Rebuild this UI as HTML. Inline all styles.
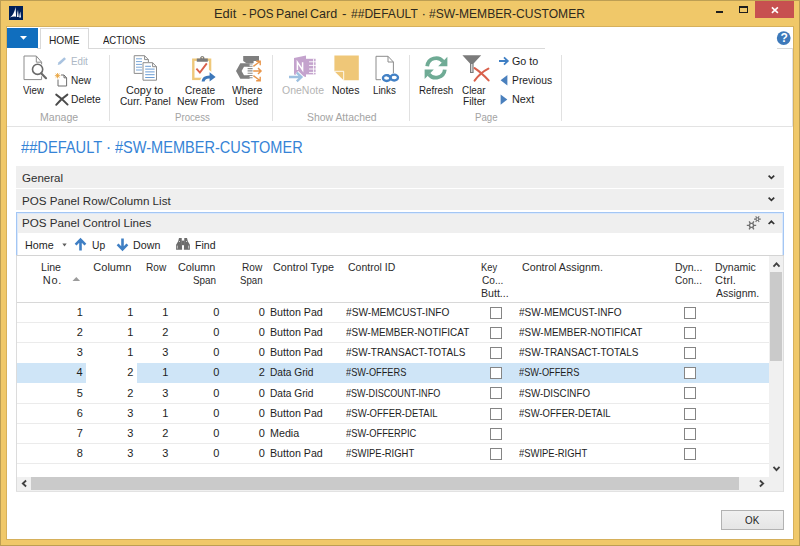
<!DOCTYPE html>
<html lang="en"><head><meta charset="utf-8"><title>Edit - POS Panel Card</title>
<style>
html,body{margin:0;padding:0;background:#f0c869;}
body{width:800px;height:546px;overflow:hidden;font-family:"Liberation Sans",sans-serif;}
#win{position:relative;width:800px;height:546px;background:#f0c869;overflow:hidden;}
#win *{box-sizing:border-box;}
.a{position:absolute;}
.t{position:absolute;white-space:pre;transform-origin:0 0;font-family:"Liberation Sans",sans-serif;}
.sep{position:absolute;top:55px;width:1px;height:66px;background:#e1e1e1;}
.ft{position:absolute;left:16px;width:768px;background:#efefef;}
.rl{position:absolute;left:17px;width:752px;height:1px;background:#ebebeb;}
.cb{position:absolute;width:12px;height:12px;border:1px solid #858585;background:#fff;}
svg{position:absolute;overflow:visible;}

</style></head>
<body>
<div id="win">
<!-- window frame -->
<div class="a" style="left:0;top:0;width:800px;height:546px;border:1px solid #bd9e53;"></div>
<div class="a" style="left:6px;top:26px;width:788px;height:514px;border:1px solid #d6b05b;"></div>
<div class="a" style="left:7px;top:27px;width:786px;height:512px;background:#fff;"></div>
<!-- app icon -->
<svg style="left:9px;top:6px" width="14" height="14" viewBox="0 0 14 14"><rect width="14" height="14" fill="#00205a"/><path d="M0.8 11.6 Q5 8.6 6.6 0.9 L7.1 10.7 Q4 10 0.8 11.6 Z" fill="#fff"/><path d="M8 10.9 Q8.2 6 9 3.7 L9.7 10.9 Z" fill="#fff"/><path d="M10.2 11.4 Q10.5 8 11.3 5.5 L12 11.6 Z" fill="#fff"/></svg>
<!-- window buttons -->
<div class="a" style="left:716px;top:11px;width:7px;height:2px;background:#1e1e1e;"></div>
<div class="a" style="left:739px;top:6px;width:9px;height:7px;border:1px solid #1e1e1e;border-top-width:2px;"></div>
<div class="a" style="left:755px;top:1px;width:39px;height:17px;background:#c75050;"></div>
<svg style="left:771px;top:7px" width="8" height="6" viewBox="0 0 8 6"><path d="M0.9 0.4 L6.9 5.8 M6.9 0.4 L0.9 5.8" stroke="#fff" stroke-width="1.6" fill="none"/></svg>
<!-- tab row -->
<div class="a" style="left:7px;top:28px;width:31px;height:20px;background:#106ebe;"></div>
<svg style="left:19.6px;top:36.2px" width="7" height="4" viewBox="0 0 7 4"><path d="M0 0 H7 L3.5 3.7 Z" fill="#fff"/></svg>
<div class="a" style="left:37px;top:48px;width:508px;height:1px;background:#d9d9d9;"></div>
<div class="a" style="left:40px;top:28px;width:49px;height:21px;background:#fff;border:1px solid #d9d9d9;border-bottom:none;"></div>
<!-- help -->
<div class="a" style="left:777px;top:48px;width:16px;height:1px;background:#d9d9d9;"></div><div class="a" style="left:792px;top:48px;width:1px;height:79px;background:#e0e0e0;"></div>
<svg style="left:777px;top:31px" width="14" height="14" viewBox="0 0 14 14"><circle cx="6.7" cy="7.1" r="6.9" fill="#3d79ba"/></svg>
<span class="t" style="left:780.4px;top:32px;font-size:12px;line-height:13px;font-weight:bold;color:#fff;">?</span>
<!-- ribbon -->
<div class="a" style="left:7px;top:126px;width:786px;height:1px;background:#e3e3e3;"></div>
<div class="sep" style="left:109px"></div>
<div class="sep" style="left:272px"></div>
<div class="sep" style="left:409px"></div>
<div class="sep" style="left:561px"></div>
<!--ICONS_START-->
<!-- View icon -->
<svg style="left:0;top:0" width="800" height="130" viewBox="0 0 800 130">
<g fill="none" stroke-linejoin="miter">
<!-- view -->
<path d="M24 56 H36.3 L41.6 62.2 V79.6 H24 Z M36.3 56 V62.2 H41.6" stroke="#8c8c8c" stroke-width="1" fill="#fff"/>
<path d="M41.4 73.4 L46 78.2" stroke="#fff" stroke-width="4" stroke-linecap="round"/>
<circle cx="37.6" cy="69.3" r="6.4" fill="#fff" stroke="none"/>
<circle cx="37.6" cy="69.3" r="5.1" stroke="#6a6a6a" stroke-width="1.6" fill="#fff"/>
<path d="M41.4 73.4 L46 78.2" stroke="#6a6a6a" stroke-width="2.2" stroke-linecap="round"/>
<!-- edit pencil -->
<path d="M57.6 65 L58.6 62.2 L64.3 57.3 L66 59 L60.4 64.2 Z" fill="#a9c3e0" stroke="none"/>
<!-- new -->
<path d="M61 75 H64 L66.6 77.8 V86 H58 V79.5 M64 75 V77.8 H66.6" stroke="#6f6f6f" stroke-width="1"/>
<path d="M57.6 73 V78.4 M54.9 75.7 H60.3 M55.7 73.8 L59.5 77.6 M59.5 73.8 L55.7 77.6" stroke="#e8a33c" stroke-width="0.9"/>
<!-- delete -->
<path d="M56.2 94.6 Q62 98.5 67.6 104.6 M67.4 94.6 Q61 99 56.2 104.8" stroke="#4b4b4b" stroke-width="1.9" stroke-linecap="round"/>
<!-- copy -->
<path d="M134.2 55.7 H144.6 L148.4 59.6 V62 M142.5 73.4 H134.2 V55.7 M144.6 55.7 V59.6 H148.4" stroke="#8c8c8c" stroke-width="1" fill="#fff"/>
<path d="M136 58.8 H142 M136 61.6 H142 M136 64.4 H142 M136 67.2 H142 M136 70 H142" stroke="#7aa7d8" stroke-width="1"/>
<path d="M143 62.7 H152.6 L156.5 66.7 V80.2 H143 Z" fill="#fff" stroke="#8c8c8c" stroke-width="1"/>
<path d="M152.6 62.7 V66.7 H156.5" stroke="#8c8c8c" stroke-width="1"/>
<path d="M145.2 66.3 H151 M145.2 69.1 H154.6 M145.2 71.9 H154.6 M145.2 74.7 H154.6 M145.2 77.5 H154.6" stroke="#6b9dd4" stroke-width="1"/>
<!-- create new from -->
<rect x="193.3" y="59.7" width="16.8" height="19.2" stroke="#efc87a" stroke-width="2.4" fill="#fff"/>
<path d="M196.8 61.7 V58.4 H200.2 V57.4 Q202.3 54.6 204.4 57.4 V58.4 H207.8 V61.7 Z" fill="#7b7b7b" stroke="none"/>
<circle cx="202.3" cy="57.6" r="0.8" fill="#f4e4c0" stroke="none"/>
<path d="M196.4 68.6 L199.9 72.6 L206.8 63.4" stroke="#d95f4b" stroke-width="1.9"/>
<path d="M200.5 83 Q201 75 209 75.5 V71 L216.6 77 L209 83 V79 Q204.5 78.6 203.8 83 Z" fill="#fff" stroke="#fff" stroke-width="1.6"/>
<path d="M201.6 81.6 Q202 75.6 209.6 75.6 V72.2 L215.6 77 L209.6 81.6 V78.6 Q205.2 78.4 204.6 81.6 Z" fill="#3d78ba" stroke="none"/>
<!-- where used -->
<path d="M243.2 56 H259 V61 H253.6 V63.2 H246.4 L243.2 61 Z" fill="#7f7f7f" stroke="none"/>
<path d="M236 71 L240.3 63.2 H249.6 V66.8 H244 L241.6 71 L244 75.2 H249.6 V78.8 H240.3 Z" fill="#7f7f7f" stroke="none"/>
<path d="M247.6 64 H252.6 M247.6 66.3 H252.6 M247.6 68.6 H252.6 M247.6 70.9 H252.6 M247.6 73.2 H252.6 M247.6 75.5 H252.6 M247.6 77.8 H252.6" stroke="#8a8a8a" stroke-width="1.1"/>
<path d="M253.2 71 H260.6 M258 68 L261 71 L258 74" stroke="#e8954a" stroke-width="1.5"/>
<path d="M253.4 66.4 L259.6 61.8 M256.2 61.2 H260.2 V65.2" stroke="#e8954a" stroke-width="1.4"/>
<path d="M253.4 75.6 L259.6 80.2 M256.2 80.8 H260.2 V76.8" stroke="#e8954a" stroke-width="1.4"/>
<!-- onenote -->
<path d="M294 58 L306 55.6 V76.9 L294 74.4 Z" fill="#c4a3cd" stroke="none"/>
<path d="M306 58.8 H315.6 V74.4 H306 Z" fill="#c4a3cd" stroke="none"/>
<path d="M309 61.8 H316 M309 65.4 H316 M309 69 H316 M309 72.4 H316 M313.6 58.8 V74.4" stroke="#fff" stroke-width="0.9"/>
<path d="M297.4 70 V62.2 L302.6 70 V62.2" stroke="#fff" stroke-width="1.5"/>
<path d="M288.6 77 H300.6 M296.8 72.6 L301.4 77 L296.8 81.4" stroke="#fff" stroke-width="4.2"/>
<path d="M289 77 H300.6 M296.8 72.6 L301.4 77 L296.8 81.4" stroke="#9dc0e0" stroke-width="2.4"/>
<!-- notes -->
<path d="M334.4 55.6 H358.8 V80.2 H343.6 L334.4 71.2 Z" fill="#efc778" stroke="none"/>
<path d="M336.6 72.3 H342.6 V78.4 Z" fill="#efc778" stroke="none"/>
<path d="M334.4 71.3 H343.7 V80.2" stroke="#fff" stroke-width="0.9"/>
<!-- links -->
<path d="M382 79.7 H376 V56.3 H388 L393.4 62 V73.4 M388 56.3 V62 H393.4" stroke="#8c8c8c" stroke-width="1"/>
<path d="M381 82.6 V73.4 H399.6 V82.6 Z" fill="#fff" stroke="none"/>
<ellipse cx="386.7" cy="78.1" rx="3.8" ry="2.9" stroke="#4381c5" stroke-width="2.3" fill="#fff"/>
<ellipse cx="394.2" cy="77.6" rx="3.8" ry="2.9" stroke="#4381c5" stroke-width="2.3" fill="none"/>
<path d="M387 75.2 Q390.6 76 390.4 79.4" stroke="#4381c5" stroke-width="2.3"/>
<!-- refresh -->
<path d="M427.2 66.2 A9 9 0 0 1 443.2 61.6" stroke="#6fab95" stroke-width="3.8"/>
<path d="M447.4 56.8 V66.2 H438.2 Z" fill="#6fab95" stroke="none"/>
<path d="M444.8 69.6 A9 9 0 0 1 428.8 74.2" stroke="#6fab95" stroke-width="3.8"/>
<path d="M424.6 79 V69.6 H433.8 Z" fill="#6fab95" stroke="none"/>
<!-- clear filter -->
<path d="M462.4 55.2 H481.2 L473.6 63.4 V73 H470 V63.4 Z" fill="#7b7b7b" stroke="none"/>
<path d="M471.2 64 V72 H472.4 V64 Z" fill="#e9e9e9" stroke="none"/>
<path d="M474.6 68.2 Q481 72.4 488.6 80.4 M488.4 68.6 Q480.4 72.6 474.6 80.6" stroke="#d9604c" stroke-width="2.1" stroke-linecap="round"/>
<!-- go to -->
<path d="M499 61 H507.6 M504 57.4 L507.8 61 L504 64.6" stroke="#3f7fc4" stroke-width="1.8"/>
<path d="M507.4 75 V85.6 L500.6 80.3 Z" fill="#4a80bd" stroke="none"/>
<path d="M500.6 94.4 V104.8 L507.3 99.6 Z" fill="#4a80bd" stroke="none"/>
</g>
</svg>

<!--ICONS_END-->
<!-- fasttabs -->
<div class="ft" style="top:166px;height:22px;"></div>
<div class="ft" style="top:189px;height:21px;"></div>
<div class="a" style="left:16px;top:212px;width:768px;height:44px;border:1px solid #a3c6f4;border-bottom:none;background:#fff;"></div>
<div class="a" style="left:17px;top:213px;width:766px;height:42px;border:1px solid #dbe8fa;border-bottom:none;"></div>
<div class="a" style="left:18px;top:214px;width:764px;height:19px;background:#efefef;"></div>
<div class="a" style="left:16px;top:255px;width:768px;height:1px;background:#d4d4d4;"></div>
<!-- toolbar icons -->
<svg style="left:0;top:212px" width="800" height="44" viewBox="0 212 800 44">
<path d="M62.3 243.6 H66.7 L64.5 246.4 Z" fill="#606060"/>
<path d="M80.5 250.4 V240.6 M75.6 244.6 L80.5 239.6 L85.4 244.6" stroke="#3f7fc4" stroke-width="2.6" fill="none"/>
<path d="M122.5 238.6 V248.6 M117.6 244.4 L122.5 249.4 L127.4 244.4" stroke="#3f7fc4" stroke-width="2.6" fill="none"/>
<g fill="#6c6c6c">
<path d="M179 237.9 H181.7 L182.1 249.7 H176.1 V244.8 L178.2 241.2 Z"/>
<path d="M187 237.9 H184.3 L183.9 249.7 H189.9 V244.8 L187.8 241.2 Z"/>
<rect x="181.6" y="240.6" width="2.8" height="4.6"/>
</g>
<path d="M177.4 245.6 V248.6 M188.6 245.6 V248.6" stroke="#e4e4e4" stroke-width="0.7"/>
<circle cx="179.5" cy="241.4" r="0.5" fill="#eee"/><circle cx="186.5" cy="241.4" r="0.5" fill="#eee"/>
<g fill="none" stroke="#727272"><path d="M753.50 225.40 L756.20 225.40 M752.50 227.13 L753.85 229.47 M750.50 227.13 L749.15 229.47 M749.50 225.40 L746.80 225.40 M750.50 223.67 L749.15 221.33 M752.50 223.67 L753.85 221.33" stroke-width="1.4"/><circle cx="751.5" cy="225.4" r="2.0" stroke-width="1.4" fill="#fafafa"/><path d="M758.80 219.10 L760.80 219.10 M758.10 220.31 L759.10 222.04 M756.70 220.31 L755.70 222.04 M756.00 219.10 L754.00 219.10 M756.70 217.89 L755.70 216.16 M758.10 217.89 L759.10 216.16" stroke-width="1.1"/><circle cx="757.4" cy="219.1" r="1.4" stroke-width="1.1" fill="#f4f4f4"/></g>
</svg>
<!-- chevrons -->
<svg style="left:768.4px;top:174.6px" width="7" height="5" viewBox="0 0 7 5"><path d="M0.6 0.7 L3.4 3.4 L6.2 0.7" stroke="#333" stroke-width="1.7" fill="none"/></svg>
<svg style="left:768.4px;top:197.2px" width="7" height="5" viewBox="0 0 7 5"><path d="M0.6 0.7 L3.4 3.4 L6.2 0.7" stroke="#333" stroke-width="1.7" fill="none"/></svg>
<svg style="left:768.4px;top:220.4px" width="7" height="5" viewBox="0 0 7 5"><path d="M0.6 4 L3.4 1.3 L6.2 4" stroke="#333" stroke-width="1.7" fill="none"/></svg>
<!-- grid -->
<div class="a" style="left:16px;top:256px;width:1px;height:236px;background:#dcdcdc;"></div>
<div class="a" style="left:17px;top:302px;width:752px;height:1px;background:#d8d8d8;"></div>
<div class="a" style="left:17px;top:363px;width:69px;height:20px;background:#cfe5f7;"></div><div class="a" style="left:137px;top:363px;width:632px;height:20px;background:#cfe5f7;"></div>
<div class="rl" style="top:322px"></div>
<div class="rl" style="top:342px"></div>
<div class="rl" style="top:403px"></div>
<div class="rl" style="top:423px"></div>
<div class="rl" style="top:443px"></div>
<div class="rl" style="top:463px"></div>
<div class="cb" style="left:490px;top:307px"></div><div class="cb" style="left:684px;top:307px"></div>
<div class="cb" style="left:490px;top:327px"></div><div class="cb" style="left:684px;top:327px"></div>
<div class="cb" style="left:490px;top:347px"></div><div class="cb" style="left:684px;top:347px"></div>
<div class="cb" style="left:490px;top:367px"></div><div class="cb" style="left:684px;top:367px"></div>
<div class="cb" style="left:490px;top:387px"></div><div class="cb" style="left:684px;top:387px"></div>
<div class="cb" style="left:490px;top:408px"></div><div class="cb" style="left:684px;top:408px"></div>
<div class="cb" style="left:490px;top:428px"></div><div class="cb" style="left:684px;top:428px"></div>
<div class="cb" style="left:490px;top:448px"></div><div class="cb" style="left:684px;top:448px"></div>
<div class="a" style="left:769px;top:256px;width:15px;height:235px;background:#f0f0f0;"></div>
<div class="a" style="left:770px;top:272px;width:12px;height:89px;background:#cacaca;"></div>
<svg style="left:772.6px;top:262.4px" width="7" height="6" viewBox="0 0 7 6"><path d="M0.5 4.6 L3.5 1.3 L6.5 4.6" stroke="#404040" stroke-width="1.8" fill="none"/></svg>
<svg style="left:772.6px;top:466.4px" width="7" height="6" viewBox="0 0 7 6"><path d="M0.5 0.8 L3.5 4.1 L6.5 0.8" stroke="#404040" stroke-width="1.8" fill="none"/></svg>
<div class="a" style="left:17px;top:477px;width:752px;height:14px;background:#f0f0f0;"></div>
<div class="a" style="left:31px;top:477px;width:708px;height:13px;background:#cacaca;"></div>
<svg style="left:20.6px;top:480.2px" width="6" height="7" viewBox="0 0 6 7"><path d="M5.1 0.5 L1.8 3.5 L5.1 6.5" stroke="#404040" stroke-width="1.8" fill="none"/></svg>
<svg style="left:759px;top:480.2px" width="6" height="7" viewBox="0 0 6 7"><path d="M0.9 0.5 L4.2 3.5 L0.9 6.5" stroke="#404040" stroke-width="1.8" fill="none"/></svg>
<div class="a" style="left:16px;top:491px;width:768px;height:1px;background:#e2e2e2;"></div>
<!-- grid right border --><div class="a" style="left:783px;top:256px;width:1px;height:236px;background:#dedede;"></div>
<!-- sort arrow --><svg style="left:72px;top:276px" width="9" height="6" viewBox="0 0 9 6"><path d="M0.5 5 L4.3 1 L8.1 5 Z" fill="#9c9c9c"/></svg>
<!-- OK button -->
<div class="a" style="left:721px;top:510px;width:63px;height:20px;border:1px solid #b2b2b2;background:linear-gradient(#f0f0f0,#e5e5e5);"></div>

<span class="t" style="left:214.04px;top:5.00px;font-size:13.5px;line-height:18px;color:#2e2a1e;transform:scaleX(0.9551);">Edit</span>
<span class="t" style="left:241.90px;top:5.00px;font-size:13.5px;line-height:18px;color:#2e2a1e;">-</span>
<span class="t" style="left:248.54px;top:5.00px;font-size:13.5px;line-height:18px;color:#2e2a1e;transform:scaleX(0.8611);">POS</span>
<span class="t" style="left:275.94px;top:5.00px;font-size:13.5px;line-height:18px;color:#2e2a1e;transform:scaleX(0.9084);">Panel</span>
<span class="t" style="left:309.90px;top:5.00px;font-size:13.5px;line-height:18px;color:#2e2a1e;transform:scaleX(0.9297);">Card</span>
<span class="t" style="left:342.10px;top:5.00px;font-size:13.5px;line-height:18px;color:#2e2a1e;">-</span>
<span class="t" style="left:350.85px;top:5.00px;font-size:13.5px;line-height:18px;color:#2e2a1e;transform:scaleX(0.8926);">##DEFAULT</span>
<span class="t" style="left:421.50px;top:5.00px;font-size:13.5px;line-height:18px;color:#2e2a1e;">·</span>
<span class="t" style="left:429.25px;top:5.00px;font-size:13.5px;line-height:18px;color:#2e2a1e;transform:scaleX(0.8948);">#SW-MEMBER-CUSTOMER</span>
<span class="t" style="left:49.31px;top:33.00px;font-size:11px;line-height:14px;color:#222;transform:scaleX(0.9219);">HOME</span>
<span class="t" style="left:103.00px;top:33.00px;font-size:11px;line-height:14px;color:#222;transform:scaleX(0.8660);">ACTIONS</span>
<span class="t" style="left:23.00px;top:83.00px;font-size:11px;line-height:14px;color:#1e1e1e;transform:scaleX(0.8842);">View</span>
<span class="t" style="left:70.83px;top:54.00px;font-size:11px;line-height:14px;color:#adb8c5;transform:scaleX(0.8877);">Edit</span>
<span class="t" style="left:71.22px;top:73.00px;font-size:11px;line-height:14px;color:#1e1e1e;transform:scaleX(0.9106);">New</span>
<span class="t" style="left:71.20px;top:92.00px;font-size:11px;line-height:14px;color:#1e1e1e;transform:scaleX(0.9333);">Delete</span>
<span class="t" style="left:40.28px;top:110.00px;font-size:11px;line-height:14px;color:#a3a3a3;transform:scaleX(0.9610);">Manage</span>
<span class="t" style="left:125.51px;top:83.00px;font-size:11px;line-height:14px;color:#1e1e1e;transform:scaleX(0.9865);">Copy to</span>
<span class="t" style="left:119.54px;top:94.00px;font-size:11px;line-height:14px;color:#1e1e1e;transform:scaleX(0.9209);">Curr. Panel</span>
<span class="t" style="left:185.29px;top:83.00px;font-size:11px;line-height:14px;color:#1e1e1e;transform:scaleX(0.9141);">Create</span>
<span class="t" style="left:176.80px;top:94.00px;font-size:11px;line-height:14px;color:#1e1e1e;transform:scaleX(0.9391);">New From</span>
<span class="t" style="left:232.00px;top:83.00px;font-size:11px;line-height:14px;color:#1e1e1e;transform:scaleX(0.9375);">Where</span>
<span class="t" style="left:235.32px;top:94.00px;font-size:11px;line-height:14px;color:#1e1e1e;transform:scaleX(0.9072);">Used</span>
<span class="t" style="left:174.84px;top:110.00px;font-size:11px;line-height:14px;color:#a3a3a3;transform:scaleX(0.8774);">Process</span>
<span class="t" style="left:282.02px;top:83.00px;font-size:11px;line-height:14px;color:#b4b4b4;transform:scaleX(0.9538);">OneNote</span>
<span class="t" style="left:332.28px;top:83.00px;font-size:11px;line-height:14px;color:#1e1e1e;transform:scaleX(0.9550);">Notes</span>
<span class="t" style="left:373.08px;top:83.00px;font-size:11px;line-height:14px;color:#1e1e1e;transform:scaleX(0.8889);">Links</span>
<span class="t" style="left:307.03px;top:110.00px;font-size:11px;line-height:14px;color:#a3a3a3;transform:scaleX(0.9481);">Show Attached</span>
<span class="t" style="left:419.08px;top:83.00px;font-size:11px;line-height:14px;color:#1e1e1e;transform:scaleX(0.8899);">Refresh</span>
<span class="t" style="left:462.05px;top:83.00px;font-size:11px;line-height:14px;color:#1e1e1e;transform:scaleX(0.8971);">Clear</span>
<span class="t" style="left:463.05px;top:94.00px;font-size:11px;line-height:14px;color:#1e1e1e;transform:scaleX(0.9298);">Filter</span>
<span class="t" style="left:512.26px;top:54.00px;font-size:11px;line-height:14px;color:#1e1e1e;transform:scaleX(0.9750);">Go to</span>
<span class="t" style="left:512.05px;top:73.00px;font-size:11px;line-height:14px;color:#1e1e1e;transform:scaleX(0.9377);">Previous</span>
<span class="t" style="left:512.01px;top:92.00px;font-size:11px;line-height:14px;color:#1e1e1e;transform:scaleX(0.9841);">Next</span>
<span class="t" style="left:474.84px;top:110.00px;font-size:11px;line-height:14px;color:#a3a3a3;transform:scaleX(0.8776);">Page</span>
<span class="t" style="left:20.50px;top:137.00px;font-size:16.5px;line-height:21px;color:#3583d6;transform:scaleX(0.8885);">##DEFAULT</span>
<span class="t" style="left:105.70px;top:137.00px;font-size:16.5px;line-height:21px;color:#3583d6;">·</span>
<span class="t" style="left:115.00px;top:137.00px;font-size:16.5px;line-height:21px;color:#3583d6;transform:scaleX(0.8810);">#SW-MEMBER-CUSTOMER</span>
<span class="t" style="left:21.51px;top:170.00px;font-size:11.7px;line-height:15px;color:#2e2e2e;transform:scaleX(0.9877);">General</span>
<span class="t" style="left:21.80px;top:193.00px;font-size:11.7px;line-height:15px;color:#2e2e2e;transform:scaleX(0.9953);">POS Panel Row/Column List</span>
<span class="t" style="left:21.80px;top:215.00px;font-size:11.7px;line-height:15px;color:#2e2e2e;transform:scaleX(0.9953);">POS Panel Control Lines</span>
<span class="t" style="left:25.27px;top:238.00px;font-size:11px;line-height:14px;color:#1e1e1e;transform:scaleX(0.9770);">Home</span>
<span class="t" style="left:91.55px;top:238.00px;font-size:11px;line-height:14px;color:#1e1e1e;transform:scaleX(0.9346);">Up</span>
<span class="t" style="left:133.27px;top:238.00px;font-size:11px;line-height:14px;color:#1e1e1e;transform:scaleX(0.9720);">Down</span>
<span class="t" style="left:194.53px;top:238.00px;font-size:11px;line-height:14px;color:#1e1e1e;transform:scaleX(0.9575);">Find</span>
<span class="t" style="left:40.78px;top:260.00px;font-size:11px;line-height:14px;color:#2b2b2b;transform:scaleX(0.9620);">Line</span>
<span class="t" style="left:42.75px;top:273.00px;font-size:11px;line-height:14px;color:#2b2b2b;letter-spacing:0.750px;">No.</span>
<span class="t" style="left:93.30px;top:260.00px;font-size:11px;line-height:14px;color:#2b2b2b;letter-spacing:0.010px;">Column</span>
<span class="t" style="left:145.56px;top:260.00px;font-size:11px;line-height:14px;color:#2b2b2b;transform:scaleX(0.9176);">Row</span>
<span class="t" style="left:178.41px;top:260.00px;font-size:11px;line-height:14px;color:#2b2b2b;transform:scaleX(0.9823);">Column</span>
<span class="t" style="left:192.55px;top:273.00px;font-size:11px;line-height:14px;color:#2b2b2b;transform:scaleX(0.8980);">Span</span>
<span class="t" style="left:241.81px;top:260.00px;font-size:11px;line-height:14px;color:#2b2b2b;transform:scaleX(0.9176);">Row</span>
<span class="t" style="left:239.56px;top:273.00px;font-size:11px;line-height:14px;color:#2b2b2b;transform:scaleX(0.8776);">Span</span>
<span class="t" style="left:273.26px;top:260.00px;font-size:11px;line-height:14px;color:#2b2b2b;transform:scaleX(0.9796);">Control Type</span>
<span class="t" style="left:348.27px;top:260.00px;font-size:11px;line-height:14px;color:#2b2b2b;transform:scaleX(0.9536);">Control ID</span>
<span class="t" style="left:481.36px;top:260.00px;font-size:11px;line-height:14px;color:#2b2b2b;transform:scaleX(0.8493);">Key</span>
<span class="t" style="left:481.54px;top:273.00px;font-size:11px;line-height:14px;color:#2b2b2b;transform:scaleX(0.9195);">Co...</span>
<span class="t" style="left:481.28px;top:286.00px;font-size:11px;line-height:14px;color:#2b2b2b;transform:scaleX(0.9630);">Butt...</span>
<span class="t" style="left:521.51px;top:260.00px;font-size:11px;line-height:14px;color:#2b2b2b;transform:scaleX(0.9725);">Control Assignm.</span>
<span class="t" style="left:675.09px;top:260.00px;font-size:11px;line-height:14px;color:#2b2b2b;transform:scaleX(0.9519);">Dyn...</span>
<span class="t" style="left:675.34px;top:273.00px;font-size:11px;line-height:14px;color:#2b2b2b;transform:scaleX(0.9179);">Con...</span>
<span class="t" style="left:714.89px;top:260.00px;font-size:11px;line-height:14px;color:#2b2b2b;transform:scaleX(0.9533);">Dynamic</span>
<span class="t" style="left:715.10px;top:273.00px;font-size:11px;line-height:14px;color:#2b2b2b;letter-spacing:0.162px;">Ctrl.</span>
<span class="t" style="left:715.60px;top:286.00px;font-size:11px;line-height:14px;color:#2b2b2b;transform:scaleX(0.9537);">Assignm.</span>
<span class="t" style="left:76.65px;top:305.00px;font-size:11px;line-height:14px;color:#1e1e1e;">1</span>
<span class="t" style="left:127.25px;top:305.00px;font-size:11px;line-height:14px;color:#1e1e1e;">1</span>
<span class="t" style="left:162.35px;top:305.00px;font-size:11px;line-height:14px;color:#1e1e1e;">1</span>
<span class="t" style="left:213.35px;top:305.00px;font-size:11px;line-height:14px;color:#1e1e1e;">0</span>
<span class="t" style="left:258.65px;top:305.00px;font-size:11px;line-height:14px;color:#1e1e1e;">0</span>
<span class="t" style="left:270.27px;top:305.00px;font-size:11px;line-height:14px;color:#1e1e1e;transform:scaleX(0.9698);">Button Pad</span>
<span class="t" style="left:346.00px;top:305.00px;font-size:11px;line-height:14px;color:#1e1e1e;transform:scaleX(0.9217);">#SW-MEMCUST-INFO</span>
<span class="t" style="left:519.00px;top:305.00px;font-size:11px;line-height:14px;color:#1e1e1e;transform:scaleX(0.9128);">#SW-MEMCUST-INFO</span>
<span class="t" style="left:76.65px;top:325.00px;font-size:11px;line-height:14px;color:#1e1e1e;">2</span>
<span class="t" style="left:127.25px;top:325.00px;font-size:11px;line-height:14px;color:#1e1e1e;">1</span>
<span class="t" style="left:162.35px;top:325.00px;font-size:11px;line-height:14px;color:#1e1e1e;">2</span>
<span class="t" style="left:213.35px;top:325.00px;font-size:11px;line-height:14px;color:#1e1e1e;">0</span>
<span class="t" style="left:258.65px;top:325.00px;font-size:11px;line-height:14px;color:#1e1e1e;">0</span>
<span class="t" style="left:270.27px;top:325.00px;font-size:11px;line-height:14px;color:#1e1e1e;transform:scaleX(0.9698);">Button Pad</span>
<span class="t" style="left:346.00px;top:325.00px;font-size:11px;line-height:14px;color:#1e1e1e;transform:scaleX(0.9028);">#SW-MEMBER-NOTIFICAT</span>
<span class="t" style="left:519.00px;top:325.00px;font-size:11px;line-height:14px;color:#1e1e1e;transform:scaleX(0.9028);">#SW-MEMBER-NOTIFICAT</span>
<span class="t" style="left:76.65px;top:345.00px;font-size:11px;line-height:14px;color:#1e1e1e;">3</span>
<span class="t" style="left:127.25px;top:345.00px;font-size:11px;line-height:14px;color:#1e1e1e;">1</span>
<span class="t" style="left:162.35px;top:345.00px;font-size:11px;line-height:14px;color:#1e1e1e;">3</span>
<span class="t" style="left:213.35px;top:345.00px;font-size:11px;line-height:14px;color:#1e1e1e;">0</span>
<span class="t" style="left:258.65px;top:345.00px;font-size:11px;line-height:14px;color:#1e1e1e;">0</span>
<span class="t" style="left:270.27px;top:345.00px;font-size:11px;line-height:14px;color:#1e1e1e;transform:scaleX(0.9698);">Button Pad</span>
<span class="t" style="left:346.00px;top:345.00px;font-size:11px;line-height:14px;color:#1e1e1e;transform:scaleX(0.9084);">#SW-TRANSACT-TOTALS</span>
<span class="t" style="left:519.00px;top:345.00px;font-size:11px;line-height:14px;color:#1e1e1e;transform:scaleX(0.9084);">#SW-TRANSACT-TOTALS</span>
<span class="t" style="left:76.40px;top:365.00px;font-size:11px;line-height:14px;color:#1e1e1e;">4</span>
<span class="t" style="left:127.25px;top:365.00px;font-size:11px;line-height:14px;color:#1e1e1e;">2</span>
<span class="t" style="left:162.35px;top:365.00px;font-size:11px;line-height:14px;color:#1e1e1e;">1</span>
<span class="t" style="left:213.35px;top:365.00px;font-size:11px;line-height:14px;color:#1e1e1e;">0</span>
<span class="t" style="left:258.65px;top:365.00px;font-size:11px;line-height:14px;color:#1e1e1e;">2</span>
<span class="t" style="left:270.31px;top:365.00px;font-size:11px;line-height:14px;color:#1e1e1e;transform:scaleX(0.9246);">Data Grid</span>
<span class="t" style="left:346.00px;top:365.00px;font-size:11px;line-height:14px;color:#1e1e1e;transform:scaleX(0.8392);">#SW-OFFERS</span>
<span class="t" style="left:519.00px;top:365.00px;font-size:11px;line-height:14px;color:#1e1e1e;transform:scaleX(0.8392);">#SW-OFFERS</span>
<span class="t" style="left:76.65px;top:386.00px;font-size:11px;line-height:14px;color:#1e1e1e;">5</span>
<span class="t" style="left:127.25px;top:386.00px;font-size:11px;line-height:14px;color:#1e1e1e;">2</span>
<span class="t" style="left:162.35px;top:386.00px;font-size:11px;line-height:14px;color:#1e1e1e;">3</span>
<span class="t" style="left:213.35px;top:386.00px;font-size:11px;line-height:14px;color:#1e1e1e;">0</span>
<span class="t" style="left:258.65px;top:386.00px;font-size:11px;line-height:14px;color:#1e1e1e;">0</span>
<span class="t" style="left:270.31px;top:386.00px;font-size:11px;line-height:14px;color:#1e1e1e;transform:scaleX(0.9246);">Data Grid</span>
<span class="t" style="left:346.00px;top:386.00px;font-size:11px;line-height:14px;color:#1e1e1e;transform:scaleX(0.8264);">#SW-DISCOUNT-INFO</span>
<span class="t" style="left:519.00px;top:386.00px;font-size:11px;line-height:14px;color:#1e1e1e;transform:scaleX(0.8893);">#SW-DISCINFO</span>
<span class="t" style="left:76.65px;top:406.00px;font-size:11px;line-height:14px;color:#1e1e1e;">6</span>
<span class="t" style="left:127.25px;top:406.00px;font-size:11px;line-height:14px;color:#1e1e1e;">3</span>
<span class="t" style="left:162.35px;top:406.00px;font-size:11px;line-height:14px;color:#1e1e1e;">1</span>
<span class="t" style="left:213.35px;top:406.00px;font-size:11px;line-height:14px;color:#1e1e1e;">0</span>
<span class="t" style="left:258.65px;top:406.00px;font-size:11px;line-height:14px;color:#1e1e1e;">0</span>
<span class="t" style="left:270.27px;top:406.00px;font-size:11px;line-height:14px;color:#1e1e1e;transform:scaleX(0.9698);">Button Pad</span>
<span class="t" style="left:346.00px;top:406.00px;font-size:11px;line-height:14px;color:#1e1e1e;transform:scaleX(0.8652);">#SW-OFFER-DETAIL</span>
<span class="t" style="left:519.00px;top:406.00px;font-size:11px;line-height:14px;color:#1e1e1e;transform:scaleX(0.8652);">#SW-OFFER-DETAIL</span>
<span class="t" style="left:76.65px;top:426.00px;font-size:11px;line-height:14px;color:#1e1e1e;">7</span>
<span class="t" style="left:127.25px;top:426.00px;font-size:11px;line-height:14px;color:#1e1e1e;">3</span>
<span class="t" style="left:162.35px;top:426.00px;font-size:11px;line-height:14px;color:#1e1e1e;">2</span>
<span class="t" style="left:213.35px;top:426.00px;font-size:11px;line-height:14px;color:#1e1e1e;">0</span>
<span class="t" style="left:258.65px;top:426.00px;font-size:11px;line-height:14px;color:#1e1e1e;">0</span>
<span class="t" style="left:270.27px;top:426.00px;font-size:11px;line-height:14px;color:#1e1e1e;transform:scaleX(0.9744);">Media</span>
<span class="t" style="left:346.00px;top:426.00px;font-size:11px;line-height:14px;color:#1e1e1e;transform:scaleX(0.8485);">#SW-OFFERPIC</span>
<span class="t" style="left:76.65px;top:446.00px;font-size:11px;line-height:14px;color:#1e1e1e;">8</span>
<span class="t" style="left:127.25px;top:446.00px;font-size:11px;line-height:14px;color:#1e1e1e;">3</span>
<span class="t" style="left:162.35px;top:446.00px;font-size:11px;line-height:14px;color:#1e1e1e;">3</span>
<span class="t" style="left:213.35px;top:446.00px;font-size:11px;line-height:14px;color:#1e1e1e;">0</span>
<span class="t" style="left:258.65px;top:446.00px;font-size:11px;line-height:14px;color:#1e1e1e;">0</span>
<span class="t" style="left:270.27px;top:446.00px;font-size:11px;line-height:14px;color:#1e1e1e;transform:scaleX(0.9698);">Button Pad</span>
<span class="t" style="left:346.00px;top:446.00px;font-size:11px;line-height:14px;color:#1e1e1e;transform:scaleX(0.8580);">#SWIPE-RIGHT</span>
<span class="t" style="left:519.00px;top:446.00px;font-size:11px;line-height:14px;color:#1e1e1e;transform:scaleX(0.8580);">#SWIPE-RIGHT</span>
<span class="t" style="left:744.95px;top:513.00px;font-size:11px;line-height:14px;color:#1e1e1e;transform:scaleX(0.8918);">OK</span>
</div>
</body></html>
